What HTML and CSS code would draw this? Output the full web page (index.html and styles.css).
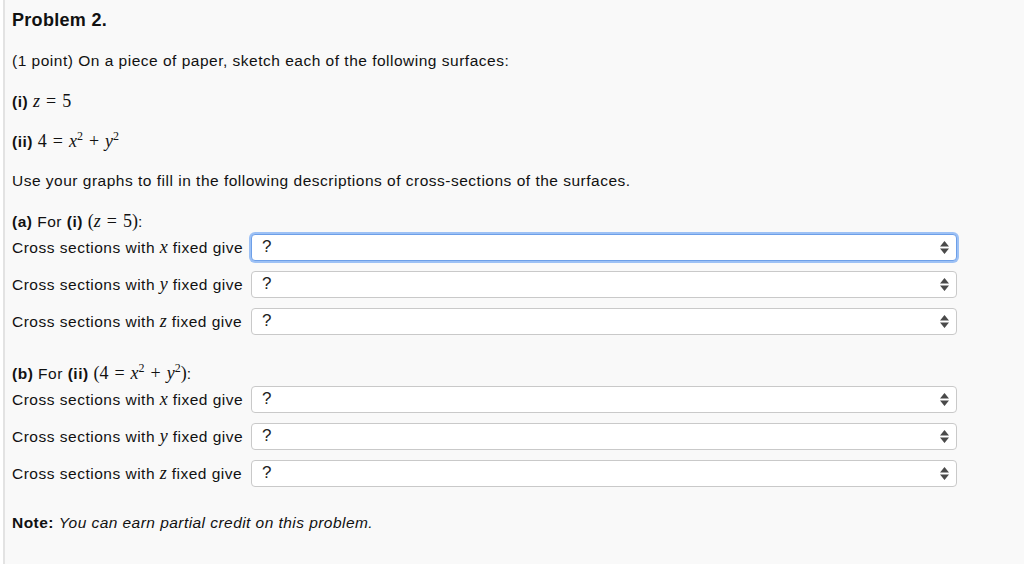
FILE: index.html
```html
<!DOCTYPE html>
<html>
<head>
<meta charset="utf-8">
<link rel="stylesheet" href="styles.css">
</head>
<body>
<div class="page">
  <h1 class="title">Problem 2.</h1>
  <p class="para">(1 point) On a piece of paper, sketch each of the following surfaces:</p>
  <p class="para"><b>(i)</b> <span class="m"><i>z</i><span class="op">=</span>5</span></p>
  <p class="para"><b>(ii)</b> <span class="m">4<span class="op">=</span><i>x</i><sup>2</sup><span class="op">+</span><i>y</i><sup>2</sup></span></p>
  <p class="para">Use your graphs to fill in the following descriptions of cross-sections of the surfaces.</p>
  <p class="para head"><b>(a)</b> For <b>(i)</b> <span class="m">(<i>z</i><span class="op">=</span>5)</span>:</p>
  <div class="rows">
    <div class="row"><span class="lbl">Cross sections with <i class="m">x</i> fixed give</span><span class="sel focus"><select><option>?</option></select><svg class="arr" width="9" height="13" viewBox="0 0 9 13"><path d="M4.5 0 L9 5.5 L0 5.5 Z M0 7.5 L9 7.5 L4.5 13 Z" fill="#4a4a4a"/></svg></span></div>
    <div class="row"><span class="lbl">Cross sections with <i class="m">y</i> fixed give</span><span class="sel"><select><option>?</option></select><svg class="arr" width="9" height="13" viewBox="0 0 9 13"><path d="M4.5 0 L9 5.5 L0 5.5 Z M0 7.5 L9 7.5 L4.5 13 Z" fill="#4a4a4a"/></svg></span></div>
    <div class="row"><span class="lbl">Cross sections with <i class="m">z</i> fixed give</span><span class="sel"><select><option>?</option></select><svg class="arr" width="9" height="13" viewBox="0 0 9 13"><path d="M4.5 0 L9 5.5 L0 5.5 Z M0 7.5 L9 7.5 L4.5 13 Z" fill="#4a4a4a"/></svg></span></div>
  </div>
  <p class="para head2"><b>(b)</b> For <b>(ii)</b> <span class="m">(4<span class="op">=</span><i>x</i><sup>2</sup><span class="op">+</span><i>y</i><sup>2</sup>)</span>:</p>
  <div class="rows rows2">
    <div class="row"><span class="lbl">Cross sections with <i class="m">x</i> fixed give</span><span class="sel"><select><option>?</option></select><svg class="arr" width="9" height="13" viewBox="0 0 9 13"><path d="M4.5 0 L9 5.5 L0 5.5 Z M0 7.5 L9 7.5 L4.5 13 Z" fill="#4a4a4a"/></svg></span></div>
    <div class="row"><span class="lbl">Cross sections with <i class="m">y</i> fixed give</span><span class="sel"><select><option>?</option></select><svg class="arr" width="9" height="13" viewBox="0 0 9 13"><path d="M4.5 0 L9 5.5 L0 5.5 Z M0 7.5 L9 7.5 L4.5 13 Z" fill="#4a4a4a"/></svg></span></div>
    <div class="row"><span class="lbl">Cross sections with <i class="m">z</i> fixed give</span><span class="sel"><select><option>?</option></select><svg class="arr" width="9" height="13" viewBox="0 0 9 13"><path d="M4.5 0 L9 5.5 L0 5.5 Z M0 7.5 L9 7.5 L4.5 13 Z" fill="#4a4a4a"/></svg></span></div>
  </div>
  <p class="para note"><b>Note:</b> <i>You can earn partial credit on this problem.</i></p>
</div>
</body>
</html>
```

FILE: styles.css
```css
html, body {
  margin: 0;
  padding: 0;
  background: #ffffff;
}
body {
  font-family: "Liberation Sans", Arial, Helvetica, sans-serif;
  color: #111;
  font-size: 15.5px;
  letter-spacing: 0.5px;
}
.page {
  margin-left: 3px;
  border-left: 2px solid #e3e3e3;
  background: #f9f9f9;
  min-height: 564px;
  padding: 8px 0 0 7px;
  box-sizing: border-box;
}
.title {
  margin: 0 0 19px 0;
  font-size: 18px;
  letter-spacing: 0.3px;
  line-height: 24px;
  font-weight: bold;
}
.para {
  margin: 0 0 20px 0;
  line-height: 20px;
  height: 20px;
  white-space: nowrap;
}
.note {
  letter-spacing: 0.45px;
}
.m {
  font-family: "Liberation Serif", "Times New Roman", serif;
  font-size: 18px;
  font-style: normal;
  letter-spacing: 0;
}
.m i, i.m {
  font-style: italic;
}
.op {
  margin: 0 6px;
}
sup {
  font-size: 12px;
  line-height: 0;
  vertical-align: 7px;
}
.head {
  margin-bottom: 3px;
}
.rows {
  display: flex;
  flex-direction: column;
  gap: 10px;
}
.row {
  display: grid;
  grid-template-columns: 239px 706px;
  align-items: center;
  height: 27px;
}
.lbl {
  white-space: nowrap;
}
.sel {
  position: relative;
  display: block;
  height: 27px;
}
.sel select {
  appearance: none;
  -webkit-appearance: none;
  width: 100%;
  height: 27px;
  margin: 0;
  box-sizing: border-box;
  border: 1px solid #c9c9c9;
  border-radius: 4px;
  background: #ffffff;
  font-family: "Liberation Sans", Arial, sans-serif;
  font-size: 17px;
  color: #222;
  padding: 0 0 2px 10px;
  outline: none;
}
.sel.focus select {
  border: 1px solid #6d9fe8;
  box-shadow: 0 0 0 2px #9dc1f5;
}
.arr {
  position: absolute;
  right: 8px;
  top: 7px;
  pointer-events: none;
}
.head2 {
  margin-top: 28px;
  margin-bottom: 3px;
}
.note {
  margin-top: 26px;
}
```
